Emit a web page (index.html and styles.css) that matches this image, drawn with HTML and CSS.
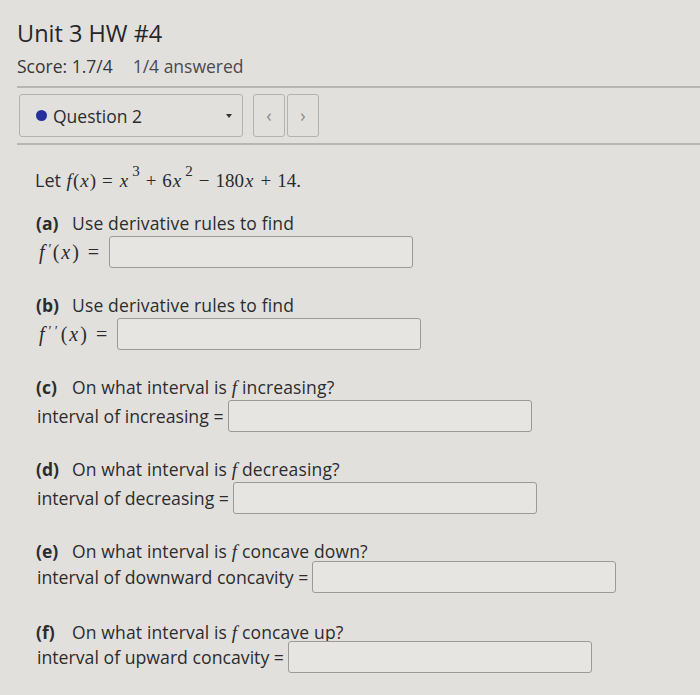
FILE: index.html
```html
<!DOCTYPE html>
<html>
<head>
<meta charset="utf-8">
<link rel="stylesheet" href="styles.css">
</head>
<body>
<div class="page">
  <h1 class="title">Unit 3 HW #4</h1>
  <div class="score"><span>Score: 1.7/4</span><span class="answered">1/4 answered</span></div>
  <div class="rule"></div>
  <div class="qbar">
    <div class="qselect">
      <span class="dot"></span>
      <span class="qname">Question 2</span>
      <span class="caret"></span>
    </div>
    <div class="qnav">
      <div class="navbtn">&lsaquo;</div>
      <div class="navbtn">&rsaquo;</div>
    </div>
  </div>
  <div class="rule rule2"></div>

  <div class="content">
    <div class="let">Let <span class="m"><i>f</i>(<i>x</i>)<span class="mo">=</span><i>x</i><sup>3</sup><span class="mo">+</span>6<i>x</i><sup>2</sup><span class="mo">−</span>180<i>x</i><span class="mo">+</span>14.</span></div>

    <div class="part">
      <div class="qline"><b>(a)</b><span class="qt">Use derivative rules to find</span></div>
      <div class="ans"><span class="m mans"><i>f</i><span class="pr">′</span>(<i>x</i>)<span class="mo">=</span></span><span class="box b1"></span></div>
    </div>
    <div class="part">
      <div class="qline"><b>(b)</b><span class="qt">Use derivative rules to find</span></div>
      <div class="ans"><span class="m mans"><i>f</i><span class="pr pr2">′′</span>(<i>x</i>)<span class="mo">=</span></span><span class="box b1"></span></div>
    </div>
    <div class="part">
      <div class="qline"><b>(c)</b><span class="qt">On what interval is <i class="fi">f</i> increasing?</span></div>
      <div class="ans"><span>interval of increasing =</span><span class="box"></span></div>
    </div>
    <div class="part">
      <div class="qline"><b>(d)</b><span class="qt">On what interval is <i class="fi">f</i> decreasing?</span></div>
      <div class="ans"><span>interval of decreasing =</span><span class="box"></span></div>
    </div>
    <div class="part pe">
      <div class="qline"><b>(e)</b><span class="qt">On what interval is <i class="fi">f</i> concave down?</span></div>
      <div class="ans"><span>interval of downward concavity =</span><span class="box"></span></div>
    </div>
    <div class="part pf">
      <div class="qline"><b>(f)</b><span class="qt">On what interval is <i class="fi">f</i> concave up?</span></div>
      <div class="ans"><span>interval of upward concavity =</span><span class="box"></span></div>
    </div>
  </div>
</div>
</body>
</html>
```
FILE: styles.css
```css
html, body {
  margin: 0;
  padding: 0;
}
body {
  background: #e2e0dd;
  font-family: "Open Sans", "Liberation Sans", sans-serif;
  color: #2c2c2e;
  width: 700px;
  height: 695px;
  overflow: hidden;
}
.page {
  padding: 19px 0 0 17px;
}
.title {
  margin: 0;
  font-size: 23.5px;
  font-weight: 400;
  line-height: 28px;
  color: #262628;
}
.score {
  margin-top: 9px;
  font-size: 17.5px;
  line-height: 20px;
  display: flex;
  gap: 20px;
  color: #36363a;
}
.answered {
  color: #4a4a4e;
}
.rule {
  margin-top: 10px;
  height: 2px;
  background: #b8b6b3;
}
.rule2 {
  margin-top: 6px;
}
.qbar {
  margin-top: 6px;
  display: flex;
  gap: 10px;
  padding-left: 2px;
}
.qselect {
  width: 224px;
  height: 43px;
  box-sizing: border-box;
  border: 1.5px solid #b4b2af;
  border-radius: 3px;
  display: flex;
  align-items: center;
  padding-left: 16px;
  position: relative;
}
.dot {
  width: 11px;
  height: 11px;
  border-radius: 50%;
  background: #27309a;
  margin-right: 6px;
}
.qname {
  font-size: 17.5px;
  color: #2c2c30;
}
.caret {
  position: absolute;
  right: 10px;
  top: 19px;
  width: 0;
  height: 0;
  border-left: 3px solid transparent;
  border-right: 3px solid transparent;
  border-top: 4px solid #333;
}
.qnav {
  display: flex;
  height: 43px;
}
.navbtn {
  width: 32px;
  height: 43px;
  box-sizing: border-box;
  border: 1.5px solid #b4b2af;
  border-radius: 3px;
  display: flex;
  align-items: center;
  justify-content: center;
  font-size: 18px;
  color: #8e8c8a;
  padding-bottom: 2px;
}
.navbtn + .navbtn {
  margin-left: 2px;
}
.content {
  padding-left: 18px;
  padding-top: 18px;
}
.let {
  font-size: 18px;
  line-height: 24px;
  height: 24px;
}
.m {
  font-family: "Liberation Serif", "DejaVu Serif", serif;
  font-size: 19px;
  color: #2a2a2c;
}
.m i {
  font-family: "Liberation Serif", serif;
  font-style: italic;
  font-size: 19px;
  padding: 0 1px;
}
.m sup {
  font-size: 15px;
  position: relative;
  top: -4px;
  margin-left: 3px;
}
.mo {
  margin: 0 6px;
}
.let .mo:nth-of-type(1) {
  margin: 0 6px;
}
.part {
  margin-top: 26px;
}
.part + .part {
  margin-top: 27px;
}
.qline {
  font-size: 17.5px;
  line-height: 20px;
  height: 20px;
  display: flex;
  padding-left: 1px;
}
.qline b {
  font-weight: 700;
  width: 36px;
}
.qt {
  letter-spacing: 0.15px;
}
.fi {
  font-family: "Liberation Serif", serif;
  font-style: italic;
  font-size: 19px;
}
.ans {
  margin-top: 3px;
  display: flex;
  align-items: center;
  font-size: 17.7px;
  padding-left: 2px;
}
.mans {
  font-size: 20px;
}
.mans i {
  font-size: 20px;
  padding: 0 2px;
}
.mans .mo {
  margin: 0 0 0 9px;
}
.pr {
  font-size: 14px;
  position: relative;
  top: -5px;
  margin-left: 2px;
  letter-spacing: 1px;
}
.pr2 {
  letter-spacing: 3px;
}
.box {
  display: block;
  margin-left: 4px;
  width: 304px;
  height: 32px;
  box-sizing: border-box;
  border: 1.5px solid #9c9a97;
  border-radius: 3px;
  background: #e7e5e2;
}
.b1 {
  margin-left: 10px;
}
.pe .ans {
  margin-top: 0;
}
.pf {
  margin-top: 29px !important;
}
.pf .ans {
  margin-top: -1px;
}
```
